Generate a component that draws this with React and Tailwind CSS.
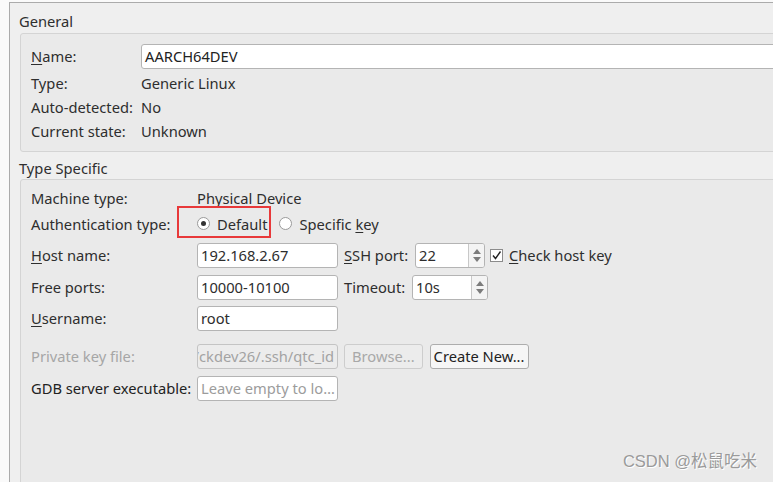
import React from 'react';

const font = { fontFamily: '"Noto Sans", "Noto Sans CJK SC", sans-serif' };

const U = ({ children }) => <span className="underline underline-offset-2">{children}</span>;

const TextInput = ({ value, width = 'w-[141px]', disabled, placeholder, clip }) => (
  <div
    className={`${width} h-[25px] shrink-0 flex items-center px-[3px] rounded-[3px] border overflow-hidden whitespace-nowrap ${
      clip ? 'justify-end' : ''
    } ${disabled ? 'bg-[#ececec] border-[#c4c4c4] text-[#a3a3a3]' : 'bg-white border-[#b4b4b4] text-[#2d2d2d]'}`}
  >
    {value ? value : <span className="text-[#9c9c9c]">{placeholder}</span>}
  </div>
);

const SpinBox = ({ value, width }) => (
  <div className={`${width} h-[25px] shrink-0 flex rounded-[3px] border border-[#b4b4b4] bg-white overflow-hidden`}>
    <div className="flex-1 flex items-center px-[3px] text-[#2d2d2d]">{value}</div>
    <div className="w-[16px] border-l border-[#c8c8c8] bg-[#f4f4f4] flex flex-col items-center justify-center gap-[3px]">
      <div className="w-0 h-0 border-l-[4px] border-r-[4px] border-b-[5px] border-l-transparent border-r-transparent border-b-[#7c7c7c]" />
      <div className="w-0 h-0 border-l-[4px] border-r-[4px] border-t-[5px] border-l-transparent border-r-transparent border-t-[#7c7c7c]" />
    </div>
  </div>
);

const Radio = ({ checked }) => (
  <div className="w-[13px] h-[13px] rounded-full border border-[#9a9a9a] bg-white flex items-center justify-center shrink-0">
    {checked && <div className="w-[5px] h-[5px] rounded-full bg-[#333]" />}
  </div>
);

const Button = ({ children, disabled, pad = 'px-[7px]' }) => (
  <div
    className={`h-[25px] flex items-center ${pad} rounded-[3px] border whitespace-nowrap ${
      disabled ? 'border-[#cdcdcd] bg-[#ececec] text-[#a8a8a8]' : 'border-[#adadad] bg-[#f6f6f6] text-[#222]'
    }`}
  >
    {children}
  </div>
);

const App = () => {
  return (
    <div style={font} className="relative w-[773px] h-[482px] overflow-hidden bg-[#fafafa] pl-[9px] pt-[2px] text-[14.7px] text-[#2e2e2e]">
      <div className="w-[800px] h-[500px] border-l border-t border-[#ababab] bg-[#efefef] pl-[10px]">
        {/* General */}
        <div className="h-[30px] pt-[8px] leading-[20px] -ml-[1px]">General</div>
        <div className="border border-[#d4d4d4] rounded-[3px] bg-[#eaeaea] pl-[10px] pt-[10px] pb-[8px]">
          <div className="flex items-center h-[25px]">
            <div className="w-[110px]"><U>N</U>ame:</div>
            <div className="flex-1 h-[25px] flex items-center px-[3px] rounded-[3px] border border-[#b4b4b4] bg-white text-[#222]">AARCH64DEV</div>
          </div>
          <div className="mt-[2px] flex items-center h-[24px]">
            <div className="w-[110px]">Type:</div>
            <div>Generic Linux</div>
          </div>
          <div className="flex items-center h-[24px]">
            <div className="w-[110px] whitespace-nowrap">Auto-detected:</div>
            <div>No</div>
          </div>
          <div className="flex items-center h-[24px]">
            <div className="w-[110px]">Current state:</div>
            <div>Unknown</div>
          </div>
        </div>

        {/* Type Specific */}
        <div className="h-[27px] pt-[6px] leading-[20px] -ml-[1px]">Type Specific</div>
        <div className="h-[320px] border border-[#d4d4d4] rounded-[3px] bg-[#eaeaea] pl-[10px] pt-[6px]">
          <div className="flex items-center h-[24px]">
            <div className="w-[166px]">Machine type:</div>
            <div>Physical Device</div>
          </div>
          <div className="relative flex items-center h-[28px]">
            <div className="w-[166px] whitespace-nowrap">Authentication type:</div>
            <div className="flex items-center gap-[7px]">
              <Radio checked />
              <span>Default</span>
            </div>
            <div className="flex items-center gap-[7px] ml-[12px]">
              <Radio />
              <span>Specific <U>k</U>ey</span>
            </div>
            <div className="absolute left-[146px] top-[-4px] w-[94px] h-[32px] border-2 border-[#e8393a]" />
          </div>
          <div className="mt-[5px] flex items-center h-[25px]">
            <div className="w-[166px]"><U>H</U>ost name:</div>
            <TextInput value="192.168.2.67" />
            <div className="ml-[6px] w-[71px]"><U>S</U>SH port:</div>
            <SpinBox value="22" width="w-[70px]" />
            <div className="ml-[5px] w-[13px] h-[13px] border border-[#8c8c8c] bg-white flex items-center justify-center">
              <svg width="11" height="11" viewBox="0 0 11 11"><path d="M2 5.5 L4.5 8.5 L9.5 1.5" fill="none" stroke="#222" strokeWidth="1.4" /></svg>
            </div>
            <div className="ml-[6px]"><U>C</U>heck host key</div>
          </div>
          <div className="mt-[7px] flex items-center h-[25px]">
            <div className="w-[166px]">Free ports:</div>
            <TextInput value="10000-10100" />
            <div className="ml-[6px] w-[68px]">Timeout:</div>
            <SpinBox value="10s" width="w-[76px]" />
          </div>
          <div className="mt-[6px] flex items-center h-[25px]">
            <div className="w-[166px]"><U>U</U>sername:</div>
            <TextInput value="root" />
          </div>
          <div className="mt-[13px] flex items-center h-[25px]">
            <div className="w-[166px] text-[#a6a6a6]">Private key file:</div>
            <TextInput value="/ckdev26/.ssh/qtc_id" disabled clip />
            <div className="ml-[6px]"><Button disabled>Browse...</Button></div>
            <div className="ml-[7px]"><Button pad="px-[3px]">Create New...</Button></div>
          </div>
          <div className="mt-[7px] flex items-center h-[25px]">
            <div className="w-[166px] text-[#222] whitespace-nowrap">GDB server executable:</div>
            <TextInput placeholder="Leave empty to lo…" />
          </div>
        </div>
      </div>

      <div
        className="absolute right-[16px] bottom-[8px] text-[16.5px] text-[#9a9a9a] [text-shadow:1px_1px_0_#ffffff]"
        style={{ fontFamily: '"Liberation Sans", "Noto Sans CJK SC", sans-serif' }}
      >
        CSDN @松鼠吃米
      </div>
    </div>
  );
};

export default App;
